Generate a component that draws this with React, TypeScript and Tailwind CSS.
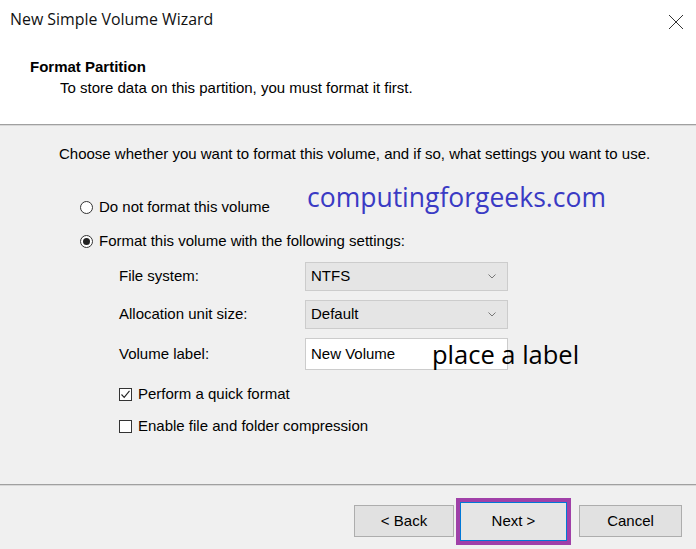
import React from 'react';

const Radio: React.FC<{ checked?: boolean }> = ({ checked }) => (
    <span className="flex h-[13px] w-[13px] items-center justify-center rounded-full border border-[#333333] bg-white">
        {checked && <span className="h-[7px] w-[7px] rounded-full bg-[#222222]" />}
    </span>
);

const Check: React.FC<{ checked?: boolean }> = ({ checked }) => (
    <span className="flex h-[13px] w-[13px] items-center justify-center border border-[#333333] bg-white">
        {checked && (
            <svg width="11" height="11" viewBox="0 0 11 11" fill="none">
                <path d="M1.5 5.5 L4.2 8.3 L9.5 1.8" stroke="#222" strokeWidth="1.1" />
            </svg>
        )}
    </span>
);

const Select: React.FC<{ value: string }> = ({ value }) => (
    <div className="flex h-[29px] w-[203px] items-center justify-between border border-[#cccccc] bg-[#e5e5e5] pl-[5px] pr-[11px]">
        <span>{value}</span>
        <svg width="8" height="5" viewBox="0 0 8 5" fill="none">
            <path d="M0.5 0.5 L4 4 L7.5 0.5" stroke="#777" strokeWidth="1" />
        </svg>
    </div>
);

const App: React.FC = () => {
    return (
        <div className="flex h-[549px] w-[696px] flex-col overflow-hidden bg-[#f0f0f0] font-['Liberation_Sans',sans-serif] text-[15px] text-black">
            <div className="h-[124px] bg-white">
                <div className="flex items-center justify-between pl-[10px] pr-[12px] pt-[8px]">
                    <span className="font-['Open_Sans',sans-serif] text-[15.9px] text-[#111]">New Simple Volume Wizard</span>
                    <svg width="16" height="16" viewBox="0 0 16 16" fill="none" className="mt-[4px]">
                        <path d="M1 1 L15 15 M15 1 L1 15" stroke="#333" strokeWidth="1" />
                    </svg>
                </div>
                <div className="pl-[30px] pt-[25px] font-bold leading-[20px]">Format Partition</div>
                <div className="pl-[60px] pt-[1px] leading-[20px]">To store data on this partition, you must format it first.</div>
            </div>
            <div className="h-[2px] border-t border-[#a0a0a0] bg-[#d8d8d8]" />
            <div className="flex h-[358px] flex-col pl-[59px]">
                <div className="mt-[18px] flex h-[20px] items-center">Choose whether you want to format this volume, and if so, what settings you want to use.</div>
                <div className="mt-[33px] flex h-[20px] items-center pl-[21px]">
                    <Radio />
                    <span className="ml-[6px] w-[208px]">Do not format this volume</span>
                    <span className="relative -top-[10px] font-['Open_Sans',sans-serif] text-[26.5px] leading-[20px] text-[#3a3ac4]">computingforgeeks.com</span>
                </div>
                <div className="mt-[14px] flex h-[20px] items-center pl-[21px]">
                    <Radio checked />
                    <span className="ml-[6px]">Format this volume with the following settings:</span>
                </div>
                <div className="mt-[11px] grid grid-cols-[186px_auto] items-center gap-y-[9px] pl-[60px]">
                    <span>File system:</span>
                    <Select value="NTFS" />
                    <span>Allocation unit size:</span>
                    <Select value="Default" />
                    <span>Volume label:</span>
                    <div className="flex items-center">
                        <div className="flex h-[32px] w-[203px] items-center border border-[#cccccc] bg-white pl-[5px]">New Volume</div>
                        <span className="-ml-[76px] font-['Open_Sans',sans-serif] text-[25.5px] leading-[20px]">place a label</span>
                    </div>
                </div>
                <div className="mt-[14px] flex h-[20px] items-center pl-[60px]">
                    <Check checked />
                    <span className="ml-[6px]">Perform a quick format</span>
                </div>
                <div className="mt-[12px] flex h-[20px] items-center pl-[60px]">
                    <Check />
                    <span className="ml-[6px]">Enable file and folder compression</span>
                </div>
            </div>
            <div className="h-[2px] border-t border-[#a0a0a0] bg-[#d8d8d8]" />
            <div className="flex items-center pl-[354px] pt-[10px]">
                <button className="mt-[1px] h-[32px] w-[100px] border border-[#adadad] bg-[#e1e1e1]">&lt; Back</button>
                <div className="ml-[2px] mt-[2px] border-[4px] border-[#a040a8] p-[0px]">
                    <button className="h-[39px] w-[107px] border border-[#0078d7] bg-[#e5e5e5]">Next &gt;</button>
                </div>
                <button className="ml-[8px] mt-[1px] h-[32px] w-[103px] border border-[#adadad] bg-[#e1e1e1]">Cancel</button>
            </div>
        </div>
    );
};

export default App;
